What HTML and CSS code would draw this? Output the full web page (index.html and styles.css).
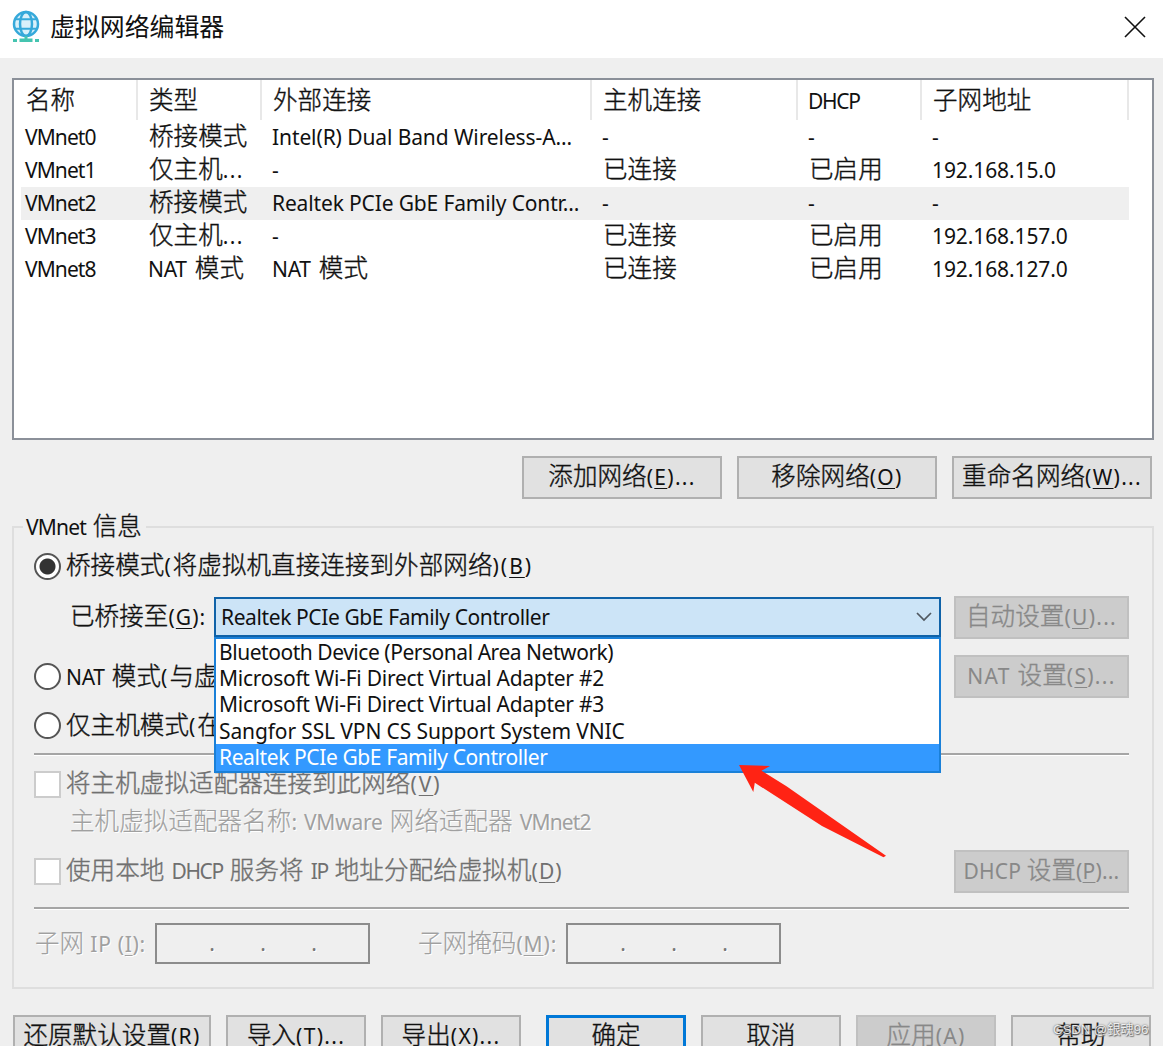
FILE: index.html
```html
<!DOCTYPE html>
<html lang="zh-CN">
<head>
<meta charset="utf-8">
<title>虚拟网络编辑器</title>
<link rel="stylesheet" href="styles.css">
</head>
<body>
<div class="window">
  <header class="titlebar">
    <svg class="logo" width="28" height="34" viewBox="0 0 28 34">
      <circle cx="14" cy="14" r="12" fill="#d9f0fa"/>
      <g fill="none" stroke="#36a9da" stroke-width="2.5">
        <circle cx="14" cy="14" r="12"/>
        <ellipse cx="14" cy="14" rx="6" ry="12"/>
        <path d="M3.5 9.2h21M3.5 18.8h21" stroke-width="2"/>
      </g>
      <path d="M12.5 26h3v2.500h5V32h-13v-3.500h5zM1 29h4v3H1zM23 29h4v3h-4z" fill="#45c4b0"/>
    </svg>
    <h1 class="title">虚拟网络编辑器</h1>
    <svg class="close" width="22" height="22" viewBox="0 0 22 22"><path d="M1 1l20 20M21 1L1 21" stroke="#111" stroke-width="1.6"/></svg>
  </header>

  <main class="content">
    <section class="table">
      <div class="row head">
        <span><b>名称</b></span><span><b>类型</b></span><span><b>外部连接</b></span><span><b>主机连接</b></span><span class="dhcp">DHCP</span><span><b>子网地址</b></span>
      </div>
      <div class="row"><span>VMnet0</span><span><b>桥接模式</b></span><span>Intel(R) Dual Band Wireless-A...</span><span>-</span><span>-</span><span>-</span></div>
      <div class="row"><span>VMnet1</span><span class="cut"><b>仅主机</b>...</span><span>-</span><span><b>已连接</b></span><span><b>已启用</b></span><span>192.168.15.0</span></div>
      <div class="row selected"><span>VMnet2</span><span><b>桥接模式</b></span><span class="realtek">Realtek PCIe GbE Family Contr...</span><span>-</span><span>-</span><span>-</span></div>
      <div class="row"><span>VMnet3</span><span class="cut"><b>仅主机</b>...</span><span>-</span><span><b>已连接</b></span><span><b>已启用</b></span><span>192.168.157.0</span></div>
      <div class="row"><span>VMnet8</span><span class="mixed">NAT <b>模式</b></span><span class="mixed">NAT <b>模式</b></span><span><b>已连接</b></span><span><b>已启用</b></span><span>192.168.127.0</span></div>
    </section>

    <div class="actions">
      <button class="btn"><b>添加网络</b>(<u>E</u>)...</button>
      <button class="btn"><b>移除网络</b>(<u>O</u>)</button>
      <button class="btn"><b>重命名网络</b>(<u>W</u>)...</button>
    </div>

    <fieldset class="group">
      <legend>VMnet <b>信息</b></legend>
      <div class="line bridged">
        <i class="radio checked"></i><span class="label"><b>桥接模式</b>(<b>将虚拟机直接连接到外部网络</b>)(<u>B</u>)</span>
      </div>
      <div class="line adapter">
        <span class="adapter-label"><b>已桥接至</b>(<u>G</u>):</span>
        <div class="combo">
          <span class="o4">Realtek PCIe GbE Family Controller</span>
          <svg width="18" height="12" viewBox="0 0 18 12"><path d="M2 2l7 7 7-7" fill="none" stroke="#505860" stroke-width="1.7"/></svg>
          <ul class="options">
            <li class="o1">Bluetooth Device (Personal Area Network)</li>
            <li class="o2">Microsoft Wi-Fi Direct Virtual Adapter #2</li>
            <li class="o2">Microsoft Wi-Fi Direct Virtual Adapter #3</li>
            <li class="o3">Sangfor SSL VPN CS Support System VNIC</li>
            <li class="o4 active">Realtek PCIe GbE Family Controller</li>
          </ul>
        </div>
        <button class="btn side" disabled><b>自动设置</b>(<u>U</u>)...</button>
      </div>
      <div class="line nat">
        <i class="radio"></i><span class="mixed">NAT <b>模式</b><span class="label">(</span><b>与虚</b></span>
        <button class="btn side" disabled>NAT <b>设置</b>(<u>S</u>)...</button>
      </div>
      <div class="line host"><i class="radio"></i><span class="label"><b>仅主机模式</b>(<b>在</b></span></div>
      <hr class="rule first">
      <div class="line connect dim"><i class="check"></i><span class="label"><b>将主机虚拟适配器连接到此网络</b>(<u>V</u>)</span></div>
      <div class="line name etched"><span class="host-name"><b>主机虚拟适配器名称</b>: VMware <b>网络适配器</b> <span class="vmnet">VMnet2</span></span></div>
      <div class="line service dim">
        <i class="check"></i><span class="lease"><b>使用本地</b> DHCP <b>服务将</b> IP <b>地址分配给虚拟机</b><span class="key">(<u>D</u>)</span></span>
        <button class="btn side dhcp-btn" disabled>DHCP <b>设置</b>(<u>P</u>)...</button>
      </div>
      <hr class="rule second">
      <div class="line subnet etched">
        <span class="ip-label"><b>子网</b> IP (<u>I</u>):</span>
        <div class="ip"><span>.</span><span>.</span><span>.</span></div>
        <span class="mask-label"><b>子网掩码</b>(<u>M</u>):</span>
        <div class="ip"><span>.</span><span>.</span><span>.</span></div>
      </div>
    </fieldset>

    <footer class="footer">
      <button class="btn wide"><b>还原默认设置</b>(<u>R</u>)</button>
      <button class="btn"><b>导入</b>(<u>T</u>)...</button>
      <button class="btn import"><b>导出</b>(<u>X</u>)...</button>
      <button class="btn default"><b>确定</b></button>
      <button class="btn"><b>取消</b></button>
      <button class="btn" disabled><b>应用</b>(<u>A</u>)</button>
      <button class="btn"><b>帮助</b></button>
    </footer>
  </main>

  <svg class="pointer" width="152" height="98" viewBox="0 0 152 98"><path d="M1 1l31 1-8.500 4.700 25 15.500L148 91.800l-2.500 1.400L84 62 16.800 18.700 15.300 28z" fill="#ff2314"/></svg>
  <span class="watermark">CSDN @銀魂96</span>
</div>
</body>
</html>
```
FILE: styles.css
```css
* { box-sizing: border-box; }
body { margin: 0; background: #efefef; }
.window {
  position: relative;
  width: 1163px;
  height: 1046px;
  overflow: hidden;
  background: #efefef;
  color: #111;
  font: 21px "Noto Sans", "Noto Sans CJK SC", sans-serif;
  letter-spacing: -0.1px;
  white-space: nowrap;
}
b {
  font-family: "Noto Sans CJK SC", sans-serif;
  font-weight: 300;
  font-size: 24.5px;
  line-height: 0;
  letter-spacing: 0.1px;
  -webkit-text-stroke: 0.4px currentColor;
}
u { text-decoration-thickness: 1px; text-underline-offset: 3px; }

.titlebar {
  display: flex;
  align-items: center;
  height: 58px;
  padding: 0 17px 5px 12px;
  background: #fff;
}
.title {
  flex: 1;
  margin: -3px 0 0 10px;
  font: 400 24.9px/40px "Noto Sans CJK SC", sans-serif;
  letter-spacing: 0;
}

.content { padding: 20px 10px 0 12px; }

.table {
  width: 1142px;
  height: 362px;
  border: 2px solid #8b9099;
  background: #fff;
}
.row {
  display: grid;
  grid-template-columns: 117px 124px 330px 206px 124px 207px;
  width: 1108px;
  height: 33px;
  margin-left: 7px;
  line-height: 33px;
}
.row span { padding-left: 10px; }
.row span:first-child { padding-left: 4px; letter-spacing: -0.9px; }
.row b { margin-left: 1px; }
.row .cut { letter-spacing: 1.300px; }
.row .realtek { letter-spacing: -0.15px; }
.mixed { letter-spacing: -0.3px; word-spacing: 2px; }
.head { height: 41px; line-height: 42px; }
.head span { height: 40px; border-right: 2px solid #e8e8e8; }
.head .dhcp { letter-spacing: -1.300px; }
.selected { background: #efefef; }

.btn {
  width: 200px;
  height: 43px;
  padding: 0;
  border: 2px solid #b0b0b0;
  background: #e1e1e1;
  color: #111;
  font: inherit;
  line-height: 39px;
  letter-spacing: 1.300px;
  text-align: center;
}
.btn:disabled { border-color: #c0c0c0; background: #ccc; color: #888; }
.btn.dhcp-btn { letter-spacing: 0.2px; }

.actions {
  display: flex;
  justify-content: flex-end;
  gap: 15px;
  padding-top: 16px;
  padding-right: 1px;
}

.group {
  width: 1142px;
  height: 476px;
  margin: 14px 0 0;
  padding: 0 23px 0 20px;
  border: 2px solid #dedede;
}
.group legend {
  height: 28px;
  margin-left: -11px;
  padding: 0 4px 0 3px;
  line-height: 28px;
  letter-spacing: -0.8px;
  word-spacing: 2px;
}
.line { display: flex; align-items: center; }
.bridged { height: 50px; }
.adapter { height: 52px; }
.nat { height: 67px; }
.host { height: 31px; }
.connect { height: 30px; }
.name { height: 46px; padding-left: 36px; }
.service { height: 52px; }
.subnet { height: 47px; }
.side { width: 175px; margin-left: auto; }

.label { letter-spacing: 2px; }
.radio {
  flex: none;
  width: 27px;
  height: 27px;
  margin-right: 5px;
  border: 2px solid #555;
  border-radius: 50%;
  background: #fff;
}
.checked { background: radial-gradient(circle, #333 0 7.5px, #fff 8.500px); }
.check {
  flex: none;
  width: 27px;
  height: 27px;
  margin-right: 5px;
  border: 2px solid #ccc;
  background: #fff;
}
.dim { color: #707070; }
.etched { color: #a0a0a0; text-shadow: 1px 1px #fff; }
.etched b { -webkit-text-stroke-width: 0.15px; }
.host-name { letter-spacing: -0.2px; word-spacing: 1.800px; }
.vmnet { letter-spacing: -0.9px; }
.lease { letter-spacing: -1.400px; word-spacing: 3px; }
.key { letter-spacing: 1px; }

.adapter-label { width: 180px; padding-left: 36px; letter-spacing: 1.100px; }
.combo {
  position: relative;
  display: flex;
  align-items: center;
  justify-content: space-between;
  width: 727px;
  height: 41px;
  padding: 0 6px 0 5px;
  border: 2px solid #0f62a8;
  border-bottom-width: 3px;
  background: #cce4f7;
}
.options {
  position: absolute;
  z-index: 2;
  top: 38px;
  left: -2px;
  width: 727px;
  height: 136px;
  margin: 0;
  padding: 0;
  border: 2px solid #1a80d8;
  background: #fff;
  line-height: 26.4px;
  list-style: none;
}
.options li { padding-left: 3px; }
.options .active { background: #3399ff; color: #fff; }
.o1 { letter-spacing: -0.46px; }
.o2 { letter-spacing: -0.27px; }
.o3 { letter-spacing: -0.12px; }
.o4 { letter-spacing: -0.400px; }

.rule { height: 3px; border: 0; border-top: 2px solid #a5a5a5; border-bottom: 1px solid #fff; }
.first { margin: 12px 0 13px; }
.second { margin: 10px 0; }

.ip-label { width: 121px; padding-left: 1px; letter-spacing: 0.7px; }
.mask-label { width: 196px; padding-left: 48px; letter-spacing: 0.9px; }
.ip {
  display: flex;
  justify-content: center;
  gap: 45.500px;
  width: 215px;
  height: 41px;
  padding-left: 1px;
  border: 2px solid #8c8c8c;
  line-height: 37px;
  color: #777;
}

.footer { display: flex; gap: 15px; padding: 26px 0 0 1px; }
.footer .btn { width: 140px; }
.footer .wide { width: 198px; }
.footer .import { margin-right: 10px; }
.footer .default { border: 3px solid #0078d7; line-height: 37px; }

.pointer { position: absolute; z-index: 3; left: 738px; top: 764px; }
.watermark {
  position: absolute;
  left: 1053px;
  top: 1020px;
  font: 13.300px/20px "Liberation Sans", "Noto Sans CJK SC", sans-serif;
  color: rgba(255, 255, 255, .85);
  text-shadow: 0 0 2px #555, 1px 1px 1px #777;
}
```
